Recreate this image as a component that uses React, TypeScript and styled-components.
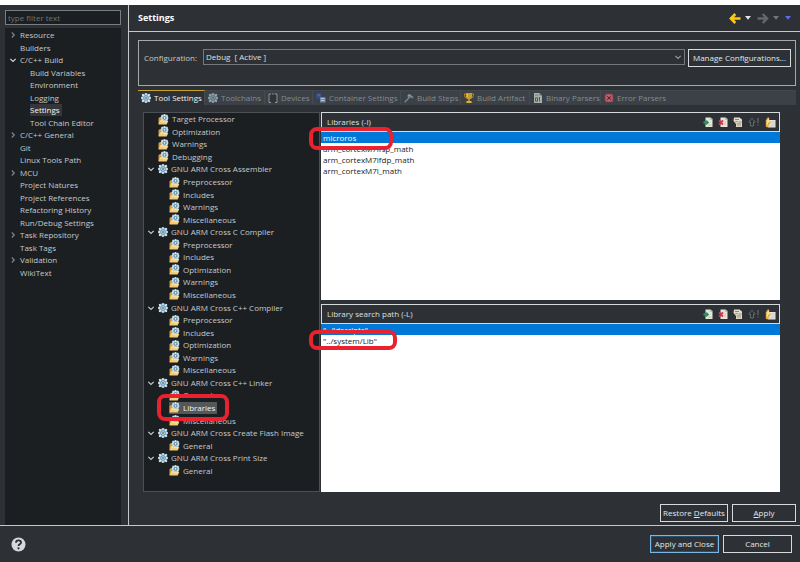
import React from "react";
import styled, { createGlobalStyle, css } from "styled-components";

const color = {
  window: "#2d3135",
  tree: "#1b1f22",
  text: "#c6cacc",
  bright: "#f2f4f4",
  muted: "#858c92",
  line: "#c4c8c8",
  blue: "#0078d7",
  mark: "#e8222e",
};

const GlobalStyle = createGlobalStyle`
  * { box-sizing: border-box; }
  body { margin: 0; background: ${color.window}; }
  body, button, input, select {
    font-family: "Open Sans", "Noto Sans", sans-serif;
    font-size: 8px;
    line-height: 10px;
    color: ${color.text};
  }
  ul { list-style: none; margin: 0; padding: 0; }
  button { padding: 0; border: 0; background: none; white-space: nowrap; }
  svg { display: block; flex: none; }
`;

const Window = styled.div`
  display: flex;
  flex-direction: column;
  min-height: 100vh;
  border-top: 5px solid #fff;
`;
const Body = styled.div`
  display: flex;
  flex: 1;
`;
const Sidebar = styled.nav`
  display: flex;
  flex-direction: column;
  gap: 3px;
  flex: 0 0 129px;
  padding: 5px 7px 0 5px;
  border-right: 1px solid ${color.line};
`;
const Filter = styled.input`
  width: 100%;
  height: 15px;
  padding: 0 2px;
  border: 1px solid #777d80;
  border-radius: 0;
  background: ${color.tree};
  &::placeholder { color: #6f7477; opacity: 1; }
`;
const NavTree = styled.div`
  flex: 1;
  padding-top: 1px;
  background: ${color.tree};
`;
const Rows = styled.ul<{ $height: number }>`
  display: grid;
  grid-auto-rows: 1fr;
  min-height: ${(p) => p.$height}px;
`;
const Row = styled.li<{ $indent: number }>`
  position: relative;
  display: flex;
  align-items: center;
  padding-left: ${(p) => p.$indent}px;
`;
const Twisty = styled.span`
  display: grid;
  place-items: center;
  width: 8px;
  margin-right: 3px;
`;
const Item = styled.button<{ $selected?: boolean; $tone?: string }>`
  display: flex;
  align-items: center;
  gap: 3px;
  height: 12px;
  padding-right: 2px;
  ${(p) => p.$selected && css`
    color: ${color.bright};
    background: ${p.$tone};
  `}
`;
const Mark = styled.span<{ $top: number; $left: number; $width: number; $height: number }>`
  position: absolute;
  z-index: 2;
  top: ${(p) => p.$top}px;
  left: ${(p) => p.$left}px;
  width: ${(p) => p.$width}px;
  height: ${(p) => p.$height}px;
  border: 4px solid ${color.mark};
  border-radius: 8px;
  pointer-events: none;
`;

const Main = styled.main`
  display: flex;
  flex: 1;
  flex-direction: column;
  min-width: 0;
`;
const TitleBar = styled.header`
  display: flex;
  align-items: center;
  justify-content: space-between;
  height: 27px;
  padding: 0 9px 0 9px;
  border-bottom: 1px solid ${color.line};
`;
const Title = styled.h1`
  margin: 0;
  font-size: 9px;
  line-height: 12px;
  color: #fff;
`;
const History = styled.div`
  display: flex;
  align-items: center;
  gap: 4px;
  > :nth-child(2n) { margin-right: 2px; }
`;
const Content = styled.div`
  display: flex;
  flex: 1;
  flex-direction: column;
  padding: 8px 4px 3px 9px;
`;
const Configuration = styled.section`
  display: flex;
  align-items: flex-start;
  gap: 3px;
  height: 46px;
  padding: 8px 4px 8px 5px;
  border: 1px solid #a4a9aa;
`;
const ConfigLabel = styled.label`
  width: 56px;
  line-height: 18px;
`;
const SelectBox = styled.div`
  display: grid;
  flex: 1;
  align-items: center;
  > * { grid-area: 1 / 1; }
  > svg { justify-self: end; margin-right: 3px; pointer-events: none; }
`;
const Select = styled.select`
  width: 100%;
  height: 16px;
  padding: 0 2px;
  appearance: none;
  border: 1px solid #73787b;
  border-radius: 0;
  color: #dde0e1;
  background: ${color.window};
`;
const PushButton = styled.button<{ $width: number; $default?: boolean }>`
  width: ${(p) => p.$width}px;
  height: 18px;
  border: 1px solid ${(p) => (p.$default ? "#78b8e4" : "#d6dada")};
  color: #e4e7e8;
  box-shadow: inset 0 0 0 1px ${(p) => (p.$default ? "#28506e" : "transparent")};
`;
const Tabs = styled.div`
  display: grid;
  grid-template-columns: 67px 60px 48px 88px 60px 69px 71px 1fr;
  height: 15px;
  margin-top: 4px;
  background: #3c4147;
`;
const Tab = styled.button<{ $active?: boolean }>`
  display: flex;
  align-items: center;
  gap: 3px;
  padding-left: 3px;
  border-top: 1px solid ${(p) => (p.$active ? "#c9a22a" : "#42474c")};
  border-right: 1px solid #464b50;
  color: ${(p) => (p.$active ? color.bright : color.muted)};
  background: ${(p) => (p.$active ? color.window : "transparent")};
  &:last-child { border-right: 0; }
`;
const Panel = styled.div`
  display: flex;
  flex: 1;
  gap: 1px;
  padding: 7px 16px 0 5px;
`;
const ToolTree = styled.div`
  flex: 0 0 177px;
  border: 1px solid #4b5054;
  background: ${color.tree};
`;
const Lists = styled.div`
  display: grid;
  flex: 1;
  grid-template-rows: 1fr 1fr;
  gap: 4px;
`;
const ListBox = styled.section`
  display: flex;
  flex-direction: column;
  background: #fff;
`;
const ListHead = styled.header`
  display: flex;
  align-items: center;
  justify-content: space-between;
  height: 20px;
  padding: 0 3px 0 5px;
  border: 1px solid #d5dada;
  background: ${color.window};
`;
const ListTitle = styled.h2`
  margin: 0;
  font-size: 8px;
  font-weight: 400;
  color: #dde0e1;
`;
const Tools = styled.div`
  display: flex;
  gap: 5px;
`;
const Entry = styled.li<{ $selected?: boolean }>`
  position: relative;
  display: flex;
  align-items: center;
  padding-left: 2px;
  color: ${(p) => (p.$selected ? "#fff" : "#222")};
  background: ${(p) => (p.$selected ? color.blue : "transparent")};
`;
const Actions = styled.div`
  display: flex;
  justify-content: flex-end;
  gap: 4px;
`;
const PageActions = styled(Actions)`
  margin-top: 12px;
`;
const Footer = styled.footer`
  display: flex;
  align-items: center;
  justify-content: space-between;
  height: 37px;
  padding: 0 8px 0 11px;
  border-top: 1px solid ${color.line};
`;

const Chevron = ({ open, stroke = "#c6caca" }: { open?: boolean; stroke?: string }) => (
  <svg width="8" height="8" viewBox="0 0 8 8" fill="none" stroke={stroke} strokeWidth="1.2">
    <path d={open ? "M1.3 2.8 4 5.5 6.7 2.8" : "M2.8 1.5 5.3 4 2.8 6.5"} />
  </svg>
);

const GearIcon = ({ dim }: { dim?: boolean }) => (
  <svg width="10" height="10" viewBox="0 0 10 10" opacity={dim ? 0.6 : 1}>
    <rect x=".8" y=".8" width="8.4" height="8.4" rx="2" fill="#7ea9c2" />
    <path d="M5 0v10M0 5h10M1.2 1.2l7.6 7.6M8.8 1.2 1.2 8.8" stroke="#e2f0f6" strokeWidth="1.4" />
    <circle cx="5" cy="5" r="2.3" fill="#eaf5f9" stroke="#3f6d8d" strokeWidth=".8" />
    <path d="M5 3.7v2.6M3.7 5h2.6" stroke="#326589" strokeWidth=".8" />
  </svg>
);

const FolderIcon = () => (
  <svg width="11" height="11" viewBox="0 0 11 11">
    <path d="M.5 10V4.2l1-1h2l1 1h4V10z" fill="#d99b3d" />
    <rect x="2.8" y=".4" width="7.4" height="7" rx="2.4" fill="#a9c8d6" />
    <path d="M6.5.2v6M2.8 3.9h7.4M3.8 1.3l5.2 5M9 1.3l-5 5" stroke="#edf7fa" strokeWidth=".9" />
    <circle cx="6.5" cy="3.9" r="1.5" fill="#d6e7ef" stroke="#44708b" strokeWidth=".9" />
    <path d="M.5 10.2 2 6.2h3l1 .8h4.3l-1.6 3.4H.8z" fill="#f3cb78" />
    <path d="M2.5 7h2.3l1 .8h3.4" fill="none" stroke="#fff0bd" strokeWidth=".8" />
  </svg>
);

const ChipIcon = () => (
  <svg width="10" height="10" viewBox="0 0 10 10" fill="none">
    <rect x="1" y="1" width="8" height="8.5" fill="#2f3438" />
    <path d="M3 1H1v8.5h2M7 1h2v8.5H7" stroke="#92989c" />
    <path d="M4 1h.8M5.6 1h.8" stroke="#aab0b3" />
    <path d="M.4 3h1.2M.4 5h1.2M.4 7h1.2M8.4 3h1.2M8.4 5h1.2M8.4 7h1.2" stroke="#4f555a" strokeWidth=".7" />
  </svg>
);
const ContainerIcon = () => (
  <svg width="10" height="10" viewBox="0 0 10 10">
    <path d="M.5.5h4.8v5H.5z" fill="#334da0" />
    <path d="M1.5 1.5h2.8v1H1.5z" fill="#5e79c7" />
    <path d="M4 4.2h5.5v5.3H4z" fill="#7289a3" />
    <path d="M5 5.5h3.5M5 7.5h3.5" stroke="#c0cbd4" strokeWidth=".9" />
  </svg>
);
const StepsIcon = () => (
  <svg width="10" height="10" viewBox="0 0 10 10" fill="none">
    <path d="M.8 9.2 5.4 4.3" stroke="#71828c" strokeWidth="1.6" />
    <path d="M3.2 2.8 5 1l4.5 2.8-1 1.6L6 4.2 5 5.5z" fill="#708790" />
    <path d="M4 2.6 5.3 1.7 7 2.8" stroke="#a4b4b8" strokeWidth=".7" />
  </svg>
);
const TrophyIcon = () => (
  <svg width="10" height="10" viewBox="0 0 10 10">
    <path d="M2.2 1H.5v1.5Q.5 4.7 3 5M7.8 1h1.7v1.5Q9.5 4.7 7 5" fill="none" stroke="#b98b22" />
    <path d="M2 0h6v3.5Q8 6 5.8 6.3V8H7.7v2H2.3V8h1.9V6.3Q2 6 2 3.5z" fill="#c79b2c" />
    <path d="M3.3 1v3.2M3 9h4" stroke="#e8c65f" />
  </svg>
);
const BinaryIcon = () => (
  <svg width="10" height="10" viewBox="0 0 10 10">
    <path d="M1 0h5.5L9 2.5V10H1z" fill="#a8b1a9" />
    <path d="M6.5 0v2.5H9" fill="#687275" />
    <path d="M2 2h3.5" stroke="#71817b" />
    <path d="M2.5 4.8h2v3.4h-2zM6.5 4.3v4.2M5.7 4.8h.8" fill="none" stroke="#3d5560" strokeWidth=".9" />
  </svg>
);
const ErrorIcon = () => (
  <svg width="10" height="10" viewBox="0 0 10 10">
    <rect x="1" y="1" width="8" height="8" rx="2" fill="#b85561" />
    <path d="M2.7 .6v1.2M5 .6v1.2M7.3.6v1.2M2.7 8.2v1.2M5 8.2v1.2M7.3 8.2v1.2M.5 3h1.3M.5 5h1.3M.5 7h1.3M8.2 3h1.3M8.2 5h1.3M8.2 7h1.3" stroke="#a34250" strokeWidth=".9" />
    <path d="m3.3 3.3 3.4 3.4m0-3.4L3.3 6.7" stroke="#4a2a33" strokeWidth="1" />
    <path d="M4.5 2.3h1M4.5 7.8h1" stroke="#dd8d91" strokeWidth=".8" />
  </svg>
);

const Page = () => (
  <>
    <path d="M2.5.5h5L9.5 2v8h-7z" fill="#e6e6da" />
    <path d="M7.3.5V2.3h2.2" fill="none" stroke="#9c9b86" strokeWidth=".7" />
  </>
);
const AddIcon = () => (
  <svg width="10" height="10" viewBox="0 0 10 10">
    <Page />
    <path d="M.4 4.3h2.8V2.8l3 2.7-3 2.7V6.7H.4z" fill="#2b8f56" />
    <path d="M5.4 8.2h2.8" stroke="#9cbfa2" strokeWidth=".8" />
  </svg>
);
const DeleteIcon = () => (
  <svg width="10" height="10" viewBox="0 0 10 10">
    <Page />
    <path d="m1 3.3 4 4.4M5 3.3 1 7.7" stroke="#d9304a" strokeWidth="1.9" />
    <path d="M6.2 5h2M6.2 7h2" stroke="#c4b7b0" strokeWidth=".8" />
  </svg>
);
const EditIcon = () => (
  <svg width="10" height="10" viewBox="0 0 10 10">
    <path d="M1 .5h5.5L9 2.5V10H3V7L.5 4z" fill="#e2ddcc" />
    <path d="M2 2.5h4M2.2 4.7h2.5M5.5 5h3M3.5 7h4.5" stroke="#7d7665" strokeWidth=".8" />
    <path d="M4 8.8h4" stroke="#a59d87" strokeWidth=".7" />
  </svg>
);
const MoveIcon = () => (
  <svg width="12" height="10" viewBox="0 0 12 10" fill="none" stroke="#7d8286" strokeWidth=".9">
    <path d="M2.5 9V5H.8L4 1.2 7.2 5H5.5v4z" strokeDasharray="1.6 .6" />
    <path d="M10 1v5M10 7.5v1" />
  </svg>
);
const ImportIcon = () => (
  <svg width="11" height="11" viewBox="0 0 11 11">
    <path d="M2.5 3h8v7.5h-8z" fill="#e4e4de" />
    <path d="M6.3 4.9h3M6.3 7h3M4.5 9h4.8" stroke="#bfc1bc" strokeWidth=".8" />
    <path d="M.8 10V3.2L2.6.5h1.6v4.2h2L3.6 8.6V10z" fill="#e3aa45" />
    <path d="M2.3 3v5M3.4 1.6v4.2" stroke="#ffe8ad" strokeWidth=".9" />
  </svg>
);
const BackIcon = () => (
  <svg width="12" height="11" viewBox="0 0 12 11" fill="none" stroke="#ffc90b" strokeWidth="2.6">
    <path d="M6.3 1 1.9 5.5l4.4 4.5M2.2 5.5h9.3" />
  </svg>
);
const ForwardIcon = () => (
  <svg width="12" height="11" viewBox="0 0 12 11" fill="none" stroke="#63686c" strokeWidth="2.4">
    <path d="m5.7 1 4.4 4.5L5.7 10M9.8 5.5H.5" />
  </svg>
);
const Triangle = ({ fill }: { fill: string }) => (
  <svg width="6" height="4" viewBox="0 0 6 4"><path d="M0 0h6L3 3.8z" fill={fill} /></svg>
);
const HelpIcon = () => (
  <svg width="15" height="15" viewBox="0 0 15 15" fill="none">
    <circle cx="7.5" cy="7.5" r="7" fill="#d6d9da" />
    <path d="M5 5.7Q5 3.4 7.5 3.4T10 5.6Q10 6.7 8.7 7.3 7.5 7.9 7.5 9" stroke="#292d31" strokeWidth="1.8" />
    <circle cx="7.5" cy="11.3" r="1.1" fill="#292d31" />
  </svg>
);

type NavEntry = { label: string; open?: boolean; child?: boolean; leaf?: boolean };
const navigation: NavEntry[] = [
  { label: "Resource" },
  { label: "Builders", leaf: true },
  { label: "C/C++ Build", open: true },
  { label: "Build Variables", child: true },
  { label: "Environment", child: true },
  { label: "Logging", child: true },
  { label: "Settings", child: true },
  { label: "Tool Chain Editor", child: true },
  { label: "C/C++ General" },
  { label: "Git", leaf: true },
  { label: "Linux Tools Path", leaf: true },
  { label: "MCU" },
  { label: "Project Natures", leaf: true },
  { label: "Project References", leaf: true },
  { label: "Refactoring History", leaf: true },
  { label: "Run/Debug Settings", leaf: true },
  { label: "Task Repository" },
  { label: "Task Tags", leaf: true },
  { label: "Validation" },
  { label: "WikiText", leaf: true },
];

const toolGroups: { name?: string; items: string[] }[] = [
  { items: ["Target Processor", "Optimization", "Warnings", "Debugging"] },
  { name: "GNU ARM Cross Assembler", items: ["Preprocessor", "Includes", "Warnings", "Miscellaneous"] },
  { name: "GNU ARM Cross C Compiler", items: ["Preprocessor", "Includes", "Optimization", "Warnings", "Miscellaneous"] },
  { name: "GNU ARM Cross C++ Compiler", items: ["Preprocessor", "Includes", "Optimization", "Warnings", "Miscellaneous"] },
  { name: "GNU ARM Cross C++ Linker", items: ["General", "Libraries", "Miscellaneous"] },
  { name: "GNU ARM Cross Create Flash Image", items: ["General"] },
  { name: "GNU ARM Cross Print Size", items: ["General"] },
];

const tabs = [
  { label: "Tool Settings", icon: <GearIcon /> },
  { label: "Toolchains", icon: <GearIcon dim /> },
  { label: "Devices", icon: <ChipIcon /> },
  { label: "Container Settings", icon: <ContainerIcon /> },
  { label: "Build Steps", icon: <StepsIcon /> },
  { label: "Build Artifact", icon: <TrophyIcon /> },
  { label: "Binary Parsers", icon: <BinaryIcon /> },
  { label: "Error Parsers", icon: <ErrorIcon /> },
];

const ListTools = () => (
  <Tools>
    <button aria-label="Add"><AddIcon /></button>
    <button aria-label="Delete"><DeleteIcon /></button>
    <button aria-label="Edit"><EditIcon /></button>
    <button aria-label="Move up"><MoveIcon /></button>
    <button aria-label="Move down"><ImportIcon /></button>
  </Tools>
);

export default function App() {
  return (
    <Window>
      <GlobalStyle />
      <Body>
        <Sidebar>
          <Filter aria-label="Filter" placeholder="type filter text" />
          <NavTree>
            <Rows $height={250}>
              {navigation.map((n) => (
                <Row key={n.label} $indent={n.child ? 14 : 4}>
                  <Twisty>{!n.child && !n.leaf && <Chevron open={n.open} stroke={n.open ? "#d5d8d8" : "#7f8588"} />}</Twisty>
                  <Item $selected={n.label === "Settings"} $tone="#34363a">{n.label}</Item>
                </Row>
              ))}
            </Rows>
          </NavTree>
        </Sidebar>
        <Main>
          <TitleBar>
            <Title>Settings</Title>
            <History>
              <button aria-label="Back"><BackIcon /></button>
              <button aria-label="Back history"><Triangle fill="#dfe7e8" /></button>
              <button aria-label="Forward"><ForwardIcon /></button>
              <button aria-label="Forward history"><Triangle fill="#73787c" /></button>
              <button aria-label="View menu"><Triangle fill="#5b6df0" /></button>
            </History>
          </TitleBar>
          <Content>
            <Configuration>
              <ConfigLabel htmlFor="configuration">Configuration:</ConfigLabel>
              <SelectBox>
                <Select id="configuration" defaultValue="debug">
                  <option value="debug">{"Debug\u00a0 [ Active ]"}</option>
                </Select>
                <Chevron open stroke="#94999c" />
              </SelectBox>
              <PushButton $width={103}>Manage Configurations...</PushButton>
            </Configuration>
            <Tabs role="tablist">
              {tabs.map((t, i) => (
                <Tab key={t.label} role="tab" aria-selected={i === 0} $active={i === 0}>
                  {t.icon}
                  {t.label}
                </Tab>
              ))}
            </Tabs>
            <Panel>
              <ToolTree>
                <Rows $height={364}>
                  {toolGroups.map((g, i) => (
                    <React.Fragment key={g.name ?? i}>
                      {g.name && (
                        <Row $indent={3}>
                          <Twisty><Chevron open /></Twisty>
                          <Item><GearIcon />{g.name}</Item>
                        </Row>
                      )}
                      {g.items.map((item) => (
                        <Row key={item} $indent={g.name ? 25 : 14}>
                          <Item $selected={item === "Libraries"} $tone="#55585a"><FolderIcon />{item}</Item>
                          {item === "Libraries" && <Mark $top={-8} $left={13} $width={72} $height={27} />}
                        </Row>
                      ))}
                    </React.Fragment>
                  ))}
                </Rows>
              </ToolTree>
              <Lists>
                <ListBox>
                  <ListHead><ListTitle>Libraries (-l)</ListTitle><ListTools /></ListHead>
                  <Rows $height={44}>
                    <Entry $selected>microros<Mark $top={-5} $left={-12} $width={84} $height={23} /></Entry>
                    <Entry>arm_cortexM7lfsp_math</Entry>
                    <Entry>arm_cortexM7lfdp_math</Entry>
                    <Entry>arm_cortexM7l_math</Entry>
                  </Rows>
                </ListBox>
                <ListBox>
                  <ListHead><ListTitle>Library search path (-L)</ListTitle><ListTools /></ListHead>
                  <Rows $height={22}>
                    <Entry $selected>"../ldscripts"</Entry>
                    <Entry>"../system/Lib"<Mark $top={-5} $left={-12} $width={88} $height={20} /></Entry>
                  </Rows>
                </ListBox>
              </Lists>
            </Panel>
            <PageActions>
              <PushButton $width={68}>Restore <u>D</u>efaults</PushButton>
              <PushButton $width={64}><u>A</u>pply</PushButton>
            </PageActions>
          </Content>
        </Main>
      </Body>
      <Footer>
        <button aria-label="Help"><HelpIcon /></button>
        <Actions>
          <PushButton $width={69} $default>Apply and Close</PushButton>
          <PushButton $width={69}>Cancel</PushButton>
        </Actions>
      </Footer>
    </Window>
  );
}
